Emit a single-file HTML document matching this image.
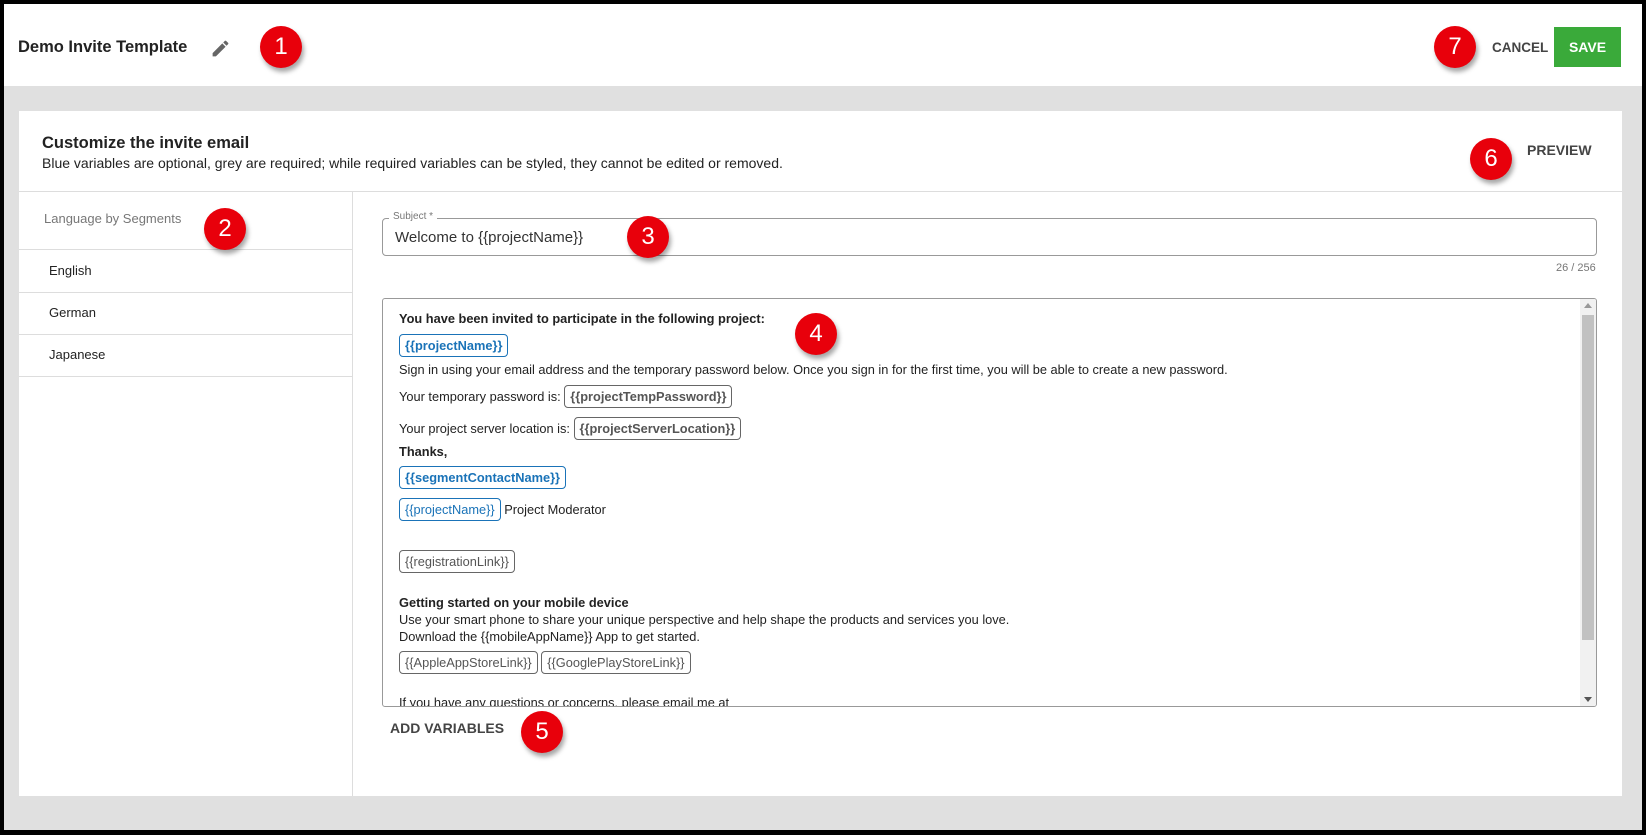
<!DOCTYPE html>
<html><head><meta charset="utf-8"><style>
*{box-sizing:border-box;margin:0;padding:0}
body{width:1646px;height:835px;background:#000;font-family:"Liberation Sans",sans-serif;color:#222;position:relative;overflow:hidden}
.frame{position:absolute;left:4px;top:4px;width:1638px;height:826px;background:#e0e0e0}
.hdr{position:absolute;left:0;top:0;width:1638px;height:82px;background:#fff}
.abs{position:absolute;white-space:nowrap}
.card{position:absolute;left:15px;top:107px;width:1603px;height:685px;background:#fff}
.badge{position:absolute;width:42px;height:42px;border-radius:50%;background:#e8000b;color:#fff;font-size:24px;text-align:center;line-height:42px;box-shadow:2px 4px 5px rgba(0,0,0,.35);font-family:"Liberation Sans",sans-serif}
.chip{display:inline-block;border:1px solid #666;border-radius:4px;padding:2px 5px;color:#555;font-size:12.8px;line-height:17px}
.chip.b{border-color:#1a73b8;color:#1a73b8}
.ln{position:absolute;left:16px;font-size:12.8px;white-space:nowrap;color:#222}
.sep{position:absolute;left:0;width:333px;height:1px;background:#ddd}
</style></head><body>
<div class="frame">
 <div class="hdr">
  <div class="abs" style="left:14px;top:34px;font-size:16.5px;font-weight:bold;color:#222">Demo Invite Template</div>
  <svg class="abs" style="left:206px;top:34px" width="21" height="21" viewBox="0 0 24 24"><path fill="#666" d="M3 17.25V21h3.75L17.81 9.94l-3.75-3.75L3 17.25zM20.71 7.04a1 1 0 000-1.41l-2.34-2.34a1 1 0 00-1.41 0l-1.83 1.83 3.75 3.75 1.83-1.83z"/></svg>
  <div class="abs" style="left:1488px;top:36px;font-size:13.5px;font-weight:bold;color:#444">CANCEL</div>
  <div class="abs" style="left:1550px;top:23px;width:67px;height:40px;background:#3aaa3a;color:#fff;font-size:14px;font-weight:bold;text-align:center;line-height:40px">SAVE</div>
 </div>
 <div class="card">
  <div class="abs" style="left:23px;top:23px;font-size:16.5px;font-weight:bold">Customize the invite email</div>
  <div class="abs" style="left:23px;top:44px;font-size:14px">Blue variables are optional, grey are required; while required variables can be styled, they cannot be edited or removed.</div>
  <div class="abs" style="left:1508px;top:31px;font-size:14px;font-weight:bold;color:#444">PREVIEW</div>
  <div class="abs" style="left:0;top:80px;width:1603px;height:1px;background:#ddd"></div>
  <div class="abs" style="left:333px;top:81px;width:1px;height:604px;background:#ddd"></div>
  <div class="abs" style="left:25px;top:100px;font-size:13px;color:#777">Language by Segments</div>
  <div class="sep" style="top:138px"></div>
  <div class="abs" style="left:30px;top:152px;font-size:13px">English</div>
  <div class="sep" style="top:181px"></div>
  <div class="abs" style="left:30px;top:194px;font-size:13px">German</div>
  <div class="sep" style="top:223px"></div>
  <div class="abs" style="left:30px;top:236px;font-size:13px">Japanese</div>
  <div class="sep" style="top:265px"></div>
  <div class="abs" style="left:363px;top:107px;width:1215px;height:38px;border:1px solid #999;border-radius:4px"></div>
  <div class="abs" style="left:370px;top:100px;background:#fff;padding:0 4px;font-size:10px;color:#777">Subject *</div>
  <div class="abs" style="left:376px;top:118px;font-size:15px;color:#333">Welcome to {{projectName}}</div>
  <div class="abs" style="left:1537px;top:151px;font-size:11px;color:#777">26 / 256</div>
  <div class="abs" style="left:363px;top:187px;width:1215px;height:409px;border:1px solid #999;border-radius:3px;overflow:hidden">
   <div class="ln" style="top:12px;font-weight:bold">You have been invited to participate in the following project:</div>
   <div class="ln" style="top:35px"><span class="chip b" style="font-weight:bold">{{projectName}}</span></div>
   <div class="ln" style="top:63px">Sign in using your email address and the temporary password below. Once you sign in for the first time, you will be able to create a new password.</div>
   <div class="ln" style="top:86px">Your temporary password is: <span class="chip" style="font-weight:bold">{{projectTempPassword}}</span></div>
   <div class="ln" style="top:118px">Your project server location is: <span class="chip" style="font-weight:bold">{{projectServerLocation}}</span></div>
   <div class="ln" style="top:145px;font-weight:bold">Thanks,</div>
   <div class="ln" style="top:167px"><span class="chip b" style="font-weight:bold">{{segmentContactName}}</span></div>
   <div class="ln" style="top:199px"><span class="chip b">{{projectName}}</span> Project Moderator</div>
   <div class="ln" style="top:251px"><span class="chip">{{registrationLink}}</span></div>
   <div class="ln" style="top:296px;font-weight:bold">Getting started on your mobile device</div>
   <div class="ln" style="top:313px">Use your smart phone to share your unique perspective and help shape the products and services you love.</div>
   <div class="ln" style="top:330px">Download the {{mobileAppName}} App to get started.</div>
   <div class="ln" style="top:352px"><span class="chip">{{AppleAppStoreLink}}</span> <span class="chip">{{GooglePlayStoreLink}}</span></div>
   <div class="ln" style="top:396px">If you have any questions or concerns, please email me at</div>
   <div class="abs" style="right:0;top:0;width:16px;height:407px;background:#f1f1f1"></div>
   <div class="abs" style="right:2px;top:16px;width:12px;height:325px;background:#c1c1c1"></div>
   <div class="abs" style="right:4px;top:4px;width:0;height:0;border:4px solid transparent;border-bottom:5px solid #999;border-top:0"></div>
   <div class="abs" style="right:4px;bottom:4px;width:0;height:0;border:4px solid transparent;border-top:5px solid #555;border-bottom:0"></div>
  </div>
  <div class="abs" style="left:371px;top:609px;font-size:14px;font-weight:bold;color:#444">ADD VARIABLES</div>
 </div>
</div>
<div class="badge" style="left:260px;top:26px">1</div>
<div class="badge" style="left:204px;top:208px">2</div>
<div class="badge" style="left:627px;top:216px">3</div>
<div class="badge" style="left:795px;top:313px">4</div>
<div class="badge" style="left:521px;top:711px">5</div>
<div class="badge" style="left:1470px;top:138px">6</div>
<div class="badge" style="left:1434px;top:26px">7</div>
</body></html>
